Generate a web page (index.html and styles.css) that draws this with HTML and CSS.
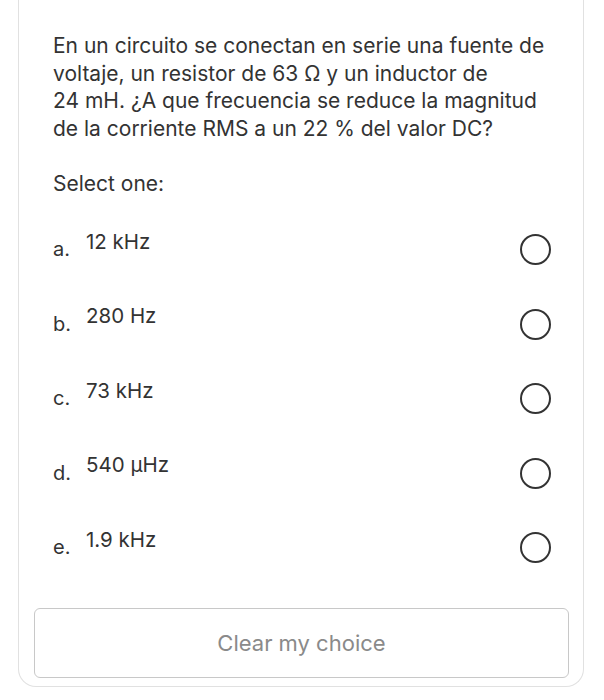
FILE: index.html
```html
<!DOCTYPE html>
<html lang="es">
<head>
    <meta charset="UTF-8">
    <title>Pregunta</title>
    <link rel="stylesheet" href="styles.css">
</head>
<body>

    <!-- QUESTION CARD -->
    <div class="card">
        <div class="question">
            <p class="qtext">En un circuito se conectan en serie una fuente de voltaje, un resistor de 63&nbsp;&Omega; y un inductor de 24&nbsp;mH. ¿A que frecuencia se reduce la magnitud de la corriente RMS a un 22&nbsp;% del valor DC?</p>
            <p class="prompt">Select one:</p>

            <div class="answers">
                <label class="answer">
                    <span class="letter">a.</span>
                    <span class="value">12 kHz</span>
                    <span class="radio"></span>
                </label>
                <label class="answer">
                    <span class="letter">b.</span>
                    <span class="value">280 Hz</span>
                    <span class="radio"></span>
                </label>
                <label class="answer">
                    <span class="letter">c.</span>
                    <span class="value">73 kHz</span>
                    <span class="radio"></span>
                </label>
                <label class="answer">
                    <span class="letter">d.</span>
                    <span class="value">540 µHz</span>
                    <span class="radio"></span>
                </label>
                <label class="answer">
                    <span class="letter">e.</span>
                    <span class="value">1.9 kHz</span>
                    <span class="radio"></span>
                </label>
            </div>
        </div>

        <button class="clear-btn">Clear my choice</button>
    </div>

</body>
</html>
```

FILE: styles.css
```css
* {
    padding: 0;
    margin: 0;
    box-sizing: border-box;
}
body {
    background-color: white;
    font-family: Inter, Roboto, "Liberation Sans", sans-serif;
    color: rgb(51,51,51);
}
.card {
    margin: 0 20px 0 18px;
    padding: 0 14px 8px 15px;
    border: 1px solid rgb(225,225,225);
    border-top: none;
    border-radius: 0 0 18px 18px;
}
.question {
    padding: 32px 0 0 19px;
}
.qtext {
    font-size: 21px;
    line-height: 27.5px;
    margin-right: 22px;
}
.prompt {
    font-size: 21px;
    line-height: 27.5px;
    margin-top: 28px;
}
.answers {
    margin-top: 12px;
    margin-bottom: 26px;
    padding-right: 18px;
}
.answer {
    display: flex;
    align-items: center;
    height: 74.5px;
}
.letter {
    font-size: 20px;
    width: 33px;
    padding-top: 5px;
}
.value {
    flex: 1;
    font-size: 20.5px;
    padding-bottom: 11px;
}
.radio {
    width: 31px;
    height: 31px;
    margin-top: 6px;
    border: 2px solid rgb(51,51,51);
    border-radius: 50%;
}
.clear-btn {
    display: block;
    width: 100%;
    height: 70px;
    background-color: white;
    border: 1px solid rgb(200,200,200);
    border-radius: 6px;
    font-family: Inter, Roboto, "Liberation Sans", sans-serif;
    font-size: 22px;
    color: rgb(138,138,138);
}
```
